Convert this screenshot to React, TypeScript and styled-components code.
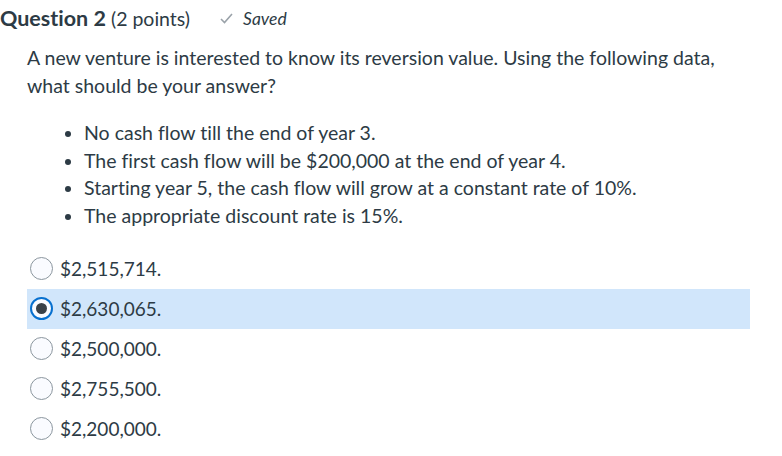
import React from "react";
import styled, { createGlobalStyle } from "styled-components";

const GlobalStyle = createGlobalStyle`
  body {
    margin: 0;
    background: #ffffff;
    font-family: Lato, "Open Sans", sans-serif;
    color: #2d3b45;
    font-variant-ligatures: none;
  }
`;

const Page = styled.div`
  width: 782px;
  height: 456px;
  overflow: hidden;
  box-sizing: border-box;
`;

const Header = styled.div`
  display: flex;
  align-items: center;
  height: 36px;
`;

const Title = styled.span`
  font-size: 21.5px;
  font-weight: 700;
  color: #2d3b45;
`;

const Points = styled.span`
  font-size: 19.5px;
  font-weight: 400;
  margin-left: 5px;
`;

const SavedTag = styled.span`
  display: flex;
  align-items: center;
  gap: 10px;
  margin-left: 30px;
  font-size: 17.5px;
  font-style: italic;
  color: #2d3b45;
`;

const Body = styled.div`
  padding: 8px 0 0 27px;
`;

const Prompt = styled.p`
  margin: 0;
  font-size: 19.5px;
  line-height: 28px;
  width: 720px;
`;

const BulletList = styled.ul`
  margin: 19px 0 0;
  padding-left: 57px;
  font-size: 19.5px;
  line-height: 27.7px;
`;

const Answers = styled.div`
  margin: 19px 0 0;
  display: flex;
  flex-direction: column;
  width: 723px;
`;

const Answer = styled.label<{ $selected?: boolean }>`
  display: flex;
  align-items: center;
  height: 40px;
  padding-left: 3px;
  background: ${(p) => (p.$selected ? "#d1e6fb" : "transparent")};
  font-size: 19px;
`;

const Radio = styled.span<{ $selected?: boolean }>`
  box-sizing: border-box;
  width: 23px;
  height: 23px;
  border-radius: 50%;
  border: ${(p) => (p.$selected ? "2px solid #0770cf" : "1px solid #8b969e")};
  background: #fafbff;
  display: flex;
  align-items: center;
  justify-content: center;
  margin-right: 7px;
  &::after {
    content: "";
    display: ${(p) => (p.$selected ? "block" : "none")};
    width: 11px;
    height: 11px;
    border-radius: 50%;
    background: #3a4148;
  }
`;

const options = [
  "$2,515,714.",
  "$2,630,065.",
  "$2,500,000.",
  "$2,755,500.",
  "$2,200,000.",
];

export default function App() {
  return (
    <Page>
      <GlobalStyle />
      <Header>
        <Title>Question 2</Title>
        <Points>(2 points)</Points>
        <SavedTag>
          <svg width="13" height="11" viewBox="0 0 13 11">
            <path d="M1 6 L4.5 9.5 L12 1" fill="none" stroke="#9aa2a9" strokeWidth="1.6" />
          </svg>
          Saved
        </SavedTag>
      </Header>
      <Body>
        <Prompt>
          A new venture is interested to know its reversion value. Using the following data, what should be your answer?
        </Prompt>
        <BulletList>
          <li>No cash flow till the end of year 3.</li>
          <li>The first cash flow will be $200,000 at the end of year 4.</li>
          <li>Starting year 5, the cash flow will grow at a constant rate of 10%.</li>
          <li>The appropriate discount rate is 15%.</li>
        </BulletList>
        <Answers>
          {options.map((o, i) => (
            <Answer key={o} $selected={i === 1}>
              <Radio $selected={i === 1} />
              {o}
            </Answer>
          ))}
        </Answers>
      </Body>
    </Page>
  );
}
